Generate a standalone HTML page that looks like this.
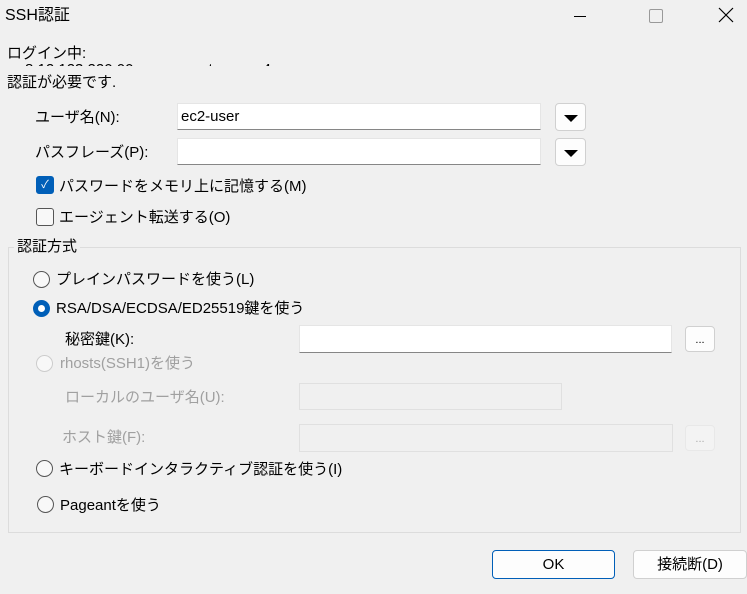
<!DOCTYPE html><html><head><meta charset="utf-8"><style>
body{margin:0;width:747px;height:594px;background:#f0f0f0;font-family:"Liberation Sans","Noto Sans CJK JP",sans-serif;font-size:15px;color:#000;position:relative;overflow:hidden}
.a{position:absolute;white-space:nowrap;line-height:18px;margin-top:2px}
.in{position:absolute;background:#fff;border:1px solid #e5e5e5;border-bottom:1px solid #868686;box-sizing:border-box}
.dis{background:#f0f0f0;border:1px solid #e0e0e0}
.btn{position:absolute;background:#fdfdfd;border:1px solid #d0d0d0;border-radius:4px;box-sizing:border-box;text-align:center}
.g{color:#a0a0a0}
.r{position:absolute;width:17px;height:17px;border:1px solid #555;border-radius:50%;box-sizing:border-box;background:#f8f8f8}
.cb{position:absolute;width:18px;height:18px;border:1px solid #555;border-radius:3px;box-sizing:border-box;background:#f8f8f8}
.tri{position:absolute;left:8px;top:11px;width:0;height:0;border-left:7px solid transparent;border-right:7px solid transparent;border-top:7px solid #000}
</style></head><body>
<div class="a" style="left:5px;top:5px;font-size:16px">SSH認証</div>
<div style="position:absolute;left:574px;top:16px;width:12px;height:1px;background:#000"></div>
<div style="position:absolute;left:649px;top:9px;width:12px;height:12px;border:1px solid #999;border-radius:2px"></div>
<svg style="position:absolute;left:718px;top:7px" width="16" height="16"><path d="M1 1L15 15M15 1L1 15" stroke="#000" stroke-width="1.2"/></svg>
<div class="a" style="left:7px;top:43px">ログイン中:</div>
<div style="position:absolute;left:25px;top:61px;height:5px;overflow:hidden"><div style="white-space:nowrap;line-height:18px;position:relative">8.12.123.220.00 &nbsp; &nbsp; &nbsp; &nbsp; &nbsp; &nbsp; &nbsp; &nbsp; .t &nbsp; &nbsp; &nbsp; &nbsp; .&nbsp; 4 &nbsp; &nbsp; &nbsp; &nbsp; .</div></div>
<div class="a" style="left:7px;top:72px">認証が必要です.</div>
<div class="a" style="left:35px;top:107px">ユーザ名(N):</div>
<div class="in" style="left:177px;top:103px;width:364px;height:27px"><span class="a" style="left:3px;top:2px">ec2-user</span></div>
<div class="btn" style="left:555px;top:103px;width:31px;height:28px"><div class="tri"></div></div>
<div class="a" style="left:35px;top:142px">パスフレーズ(P):</div>
<div class="in" style="left:177px;top:138px;width:364px;height:27px"></div>
<div class="btn" style="left:555px;top:138px;width:31px;height:28px"><div class="tri"></div></div>
<div class="cb" style="left:36px;top:176px;background:#005fb8;border-color:#005fb8;color:#fff;font-size:11px;line-height:16px;text-align:center">✓</div>
<div class="a" style="left:59px;top:176px">パスワードをメモリ上に記憶する(M)</div>
<div class="cb" style="left:36px;top:208px"></div>
<div class="a" style="left:59px;top:207px">エージェント転送する(O)</div>
<div style="position:absolute;left:8px;top:247px;width:733px;height:286px;border:1px solid #dcdcdc;box-sizing:border-box"></div>
<div class="a" style="left:14px;top:236px;background:#f0f0f0;padding:0 3px">認証方式</div>
<div class="r" style="left:33px;top:271px"></div>
<div class="a" style="left:56px;top:269px">プレインパスワードを使う(L)</div>
<div class="r" style="left:33px;top:300px;border:5px solid #005fb8;background:#fff"></div>
<div class="a" style="left:56px;top:298px">RSA/DSA/ECDSA/ED25519鍵を使う</div>
<div class="a" style="left:65px;top:329px">秘密鍵(K):</div>
<div class="in" style="left:299px;top:325px;width:373px;height:28px"></div>
<div class="btn" style="left:685px;top:326px;width:30px;height:26px;font-size:11px;line-height:26px">...</div>
<div class="r" style="left:36px;top:355px;border-color:#ccc"></div>
<div class="a g" style="left:60px;top:353px">rhosts(SSH1)を使う</div>
<div class="a g" style="left:65px;top:387px">ローカルのユーザ名(U):</div>
<div class="in dis" style="left:299px;top:383px;width:263px;height:27px"></div>
<div class="a g" style="left:62px;top:427px">ホスト鍵(F):</div>
<div class="in dis" style="left:299px;top:424px;width:374px;height:28px"></div>
<div class="btn" style="left:685px;top:425px;width:30px;height:26px;font-size:11px;line-height:26px;color:#aaa;border-color:#e8e8e8;background:#f3f3f3">...</div>
<div class="r" style="left:36px;top:460px"></div>
<div class="a" style="left:59px;top:459px">キーボードインタラクティブ認証を使う(I)</div>
<div class="r" style="left:37px;top:496px"></div>
<div class="a" style="left:60px;top:495px">Pageantを使う</div>
<div class="btn" style="left:492px;top:550px;width:123px;height:29px;line-height:27px;border:1px solid #005fb8">OK</div>
<div class="btn" style="left:633px;top:550px;width:114px;height:29px;line-height:27px">接続断(D)</div>
</body></html>
